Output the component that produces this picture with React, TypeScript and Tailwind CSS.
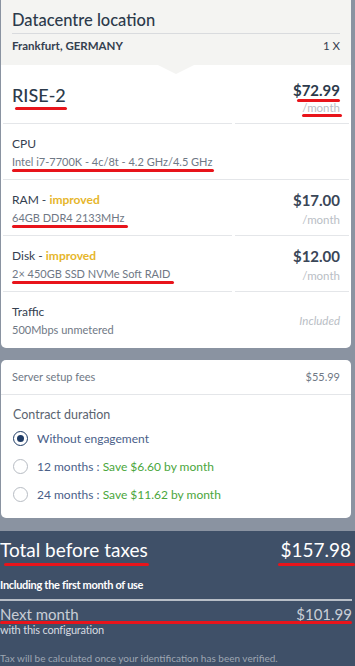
import React from 'react';

const Mark = ({ className }: { className: string }) => (
  <span className={`absolute h-[3px] rounded-full bg-[#e8141b] ${className}`} />
);

const Row = ({
  label,
  badge,
  detail,
  price,
  mark,
  last,
}: {
  label: string;
  badge?: boolean;
  detail: string;
  price?: React.ReactNode;
  mark?: string;
  last?: boolean;
}) => {
  const border = last ? '' : 'border-b border-[#e4e6e9]';
  return (
    <>
      <div className={`${border} ${price ? '' : 'col-span-2'} h-[56px] pl-[9px] pt-[11px]`}>
        <div className="text-[12px] leading-[18px] text-[#34404f]">
          {label}
          {badge && (
            <>
              {' - '}
              <span className="font-bold text-[#e6b62b]">improved</span>
            </>
          )}
        </div>
        <div className="relative w-fit text-[11px] leading-[18px] text-[#6f7885]">
          {detail}
          {mark && <Mark className={mark} />}
        </div>
      </div>
      {price && <div className={`${border} flex h-[56px] flex-col items-end pr-[9px] pt-[10px]`}>{price}</div>}
    </>
  );
};

const Price = ({ value }: { value: string }) => (
  <>
    <div className="text-[15px] font-bold leading-[20px] text-[#3a4657]">{value}</div>
    <div className="text-[11.5px] leading-[20px] text-[#b9bec5]">/month</div>
  </>
);

const Radio = ({ checked, children }: { checked?: boolean; children: React.ReactNode }) => (
  <div className="flex h-[28px] items-center gap-[9px] pl-[12px]">
    <span
      className={`flex h-[15px] w-[15px] items-center justify-center rounded-full border ${
        checked ? 'border-[#1f3c66] border-[1.5px]' : 'border-[#b7bcc3]'
      } bg-white`}
    >
      {checked && <span className="h-[7px] w-[7px] rounded-full bg-[#1f3c66]" />}
    </span>
    <span className="text-[12px] text-[#4a6089]">{children}</span>
  </div>
);

export default function App() {
  return (
    <div className="min-h-[666px] w-[355px] overflow-hidden bg-[#8a93a1] font-['Lato',sans-serif]">
      <div className="pl-[1px] pr-[4px]">
        {/* configuration card */}
        <div className="overflow-hidden rounded-b-[5px] bg-white">
          <div className="h-[65px] bg-[#f4f4f2] px-[11px] pt-[9px]">
            <h2 className="border-b border-[#d9dbde] pb-[1px] text-[16.5px] font-medium leading-[23px] text-[#2c3a4b]">
              Datacentre location
            </h2>
            <div className="flex items-center justify-between pt-[4px] text-[11.5px] leading-[16px] text-[#34404f]">
              <span className="font-bold">Frankfurt, GERMANY</span>
              <span>1 X</span>
            </div>
          </div>
          <div className="relative px-[2px]">
            <span className="absolute left-[157px] top-0 h-0 w-0 border-x-[18px] border-t-[9px] border-x-transparent border-t-[#f4f4f2]" />
            <div className="grid grid-cols-[1fr_114px] gap-x-[3px]">
              <div className="flex h-[59px] items-center border-b border-[#e4e6e9] pl-[9px] pt-[1px]">
                <span className="relative text-[18px] font-medium leading-[22px] text-[#2c3a4b]">
                  RISE-2
                  <Mark className="-bottom-[4px] left-[3px] w-[52px]" />
                </span>
              </div>
              <div className="flex h-[59px] flex-col items-end border-b border-[#e4e6e9] pr-[9px] pt-[15px]">
                <span className="relative text-[15px] font-bold leading-[20px] text-[#2c3a4b]">
                  $72.99
                  <Mark className="-bottom-[2px] left-[4px] w-[43px]" />
                </span>
                <span className="relative text-[11.5px] leading-[16px] text-[#b9bec5]">
                  /month
                  <Mark className="-bottom-[1px] left-[0px] w-[40px]" />
                </span>
              </div>
              <Row
                label="CPU"
                detail="Intel i7-7700K - 4c/8t - 4.2 GHz/4.5 GHz"
                mark="-bottom-[1px] left-0 w-[202px]"
              />
              <Row
                label="RAM"
                badge
                detail="64GB DDR4 2133MHz"
                price={<Price value="$17.00" />}
                mark="-bottom-[1px] left-0 w-[116px]"
              />
              <Row
                label="Disk"
                badge
                detail="2× 450GB SSD NVMe Soft RAID"
                price={<Price value="$12.00" />}
                mark="-bottom-[1px] left-0 w-[162px]"
              />
              <Row
                label="Traffic"
                detail="500Mbps unmetered"
                last
                price={<span className="pt-[10px] text-[11.5px] italic text-[#b9bec5]">Included</span>}
              />
            </div>
          </div>
        </div>

        {/* fees and duration card */}
        <div className="mt-[12px] rounded-[5px] bg-white pb-[9px]">
          <div className="flex h-[35px] items-center justify-between border-b border-[#e4e6e9] px-[11px] text-[11px] text-[#6f7885]">
            <span>Server setup fees</span>
            <span>$55.99</span>
          </div>
          <div className="px-[12px] pt-[11px] text-[12.5px] text-[#5b6470]">Contract duration</div>
          <Radio checked>Without engagement</Radio>
          <Radio>
            12 months : <span className="text-[#4aa63c]">Save $6.60 by month</span>
          </Radio>
          <Radio>
            24 months : <span className="text-[#4aa63c]">Save $11.62 by month</span>
          </Radio>
        </div>
      </div>

      {/* totals */}
      <div className="mt-[13px] bg-[#3f5068] pb-[4px] pt-[6px] text-white">
        <div className="flex items-center justify-between pr-[4px] text-[19px] leading-[26px]">
          <span className="relative">
            Total before taxes
            <Mark className="-bottom-[3px] left-[4px] w-[145px]" />
          </span>
          <span className="relative">
            $157.98
            <Mark className="-bottom-[3px] -right-[4px] w-[77px]" />
          </span>
        </div>
        <div className="pt-[15px] text-[11px] font-bold leading-[14px] tracking-[-0.3px]">Including the first month of use</div>
        <div className="relative mt-[7px] mr-[3px] border-t-2 border-[#b8bec7] pt-[4px]">
          <div className="flex items-center justify-between text-[15px] leading-[18px] text-[#c9ced6]">
            <span>Next month</span>
            <span>$101.99</span>
          </div>
          <Mark className="left-0 top-[20px] w-[352px]" />
          <div className="text-[11px] leading-[14px] tracking-[-0.2px] text-[#d7dbe1]">with this configuration</div>
        </div>
        <div className="pt-[14px] text-[10px] leading-[14px] text-[#9ea6b2]">
          Tax will be calculated once your identification has been verified.
        </div>
      </div>
    </div>
  );
}
